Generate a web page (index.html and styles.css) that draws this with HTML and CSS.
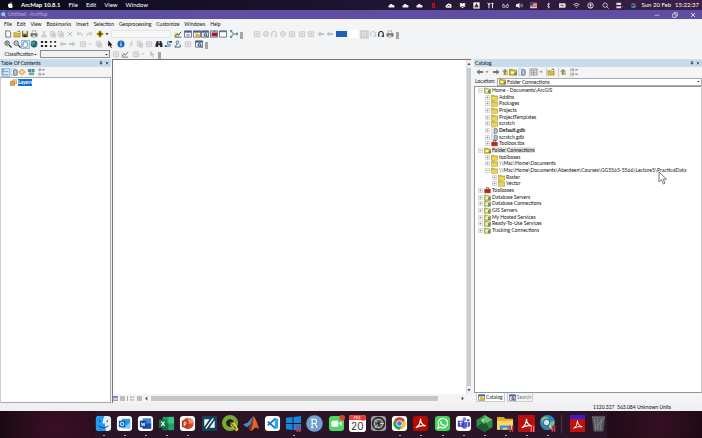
FILE: index.html
```html
<!DOCTYPE html>
<html lang="en">
<head>
<meta charset="utf-8">
<title>Untitled - ArcMap</title>
<link rel="stylesheet" href="styles.css">
</head>
<body>
<svg class="sprite" aria-hidden="true">
  <symbol id="new" viewBox="0 0 9 9"><path d="M2 1h4l1.500 1.500V8H2z" fill="#fff" stroke="#556" stroke-width=".9"/></symbol>
  <symbol id="open" viewBox="0 0 9 9"><path d="M1 3h3l1 1h3v4H1z" fill="#e0bd2c" stroke="#8a7a20" stroke-width=".6"/><path d="M5 2l2-1 1 2" fill="none" stroke="#3a7a3a"/></symbol>
  <symbol id="save" viewBox="0 0 9 9"><path d="M1 1h7v7H1z" fill="#7d7c24"/><path d="M2.500 1h4v3h-4z" fill="#e9e9dc"/><path d="M3 6h3v2H3z" fill="#222"/></symbol>
  <symbol id="print" viewBox="0 0 9 9"><path d="M1 4h7v3H1z" fill="#8d8d78" stroke="#444" stroke-width=".6"/><path d="M2.500 1h4v3h-4zM2.500 6h4v2h-4z" fill="#fff" stroke="#555" stroke-width=".5"/></symbol>
  <symbol id="cut" viewBox="0 0 9 9"><path d="M3 1l2 5M6 1L4 6" stroke="#bbb" stroke-width=".8"/><path d="M2 6h2v2H2zM5 6h2v2H5z" fill="none" stroke="#bbb" stroke-width=".8"/></symbol>
  <symbol id="copy" viewBox="0 0 9 9"><path d="M1.500 1.500h4v5h-4zM3.500 3.500h4v4.500h-4zM4.500 5h2M4.500 6.500h2" fill="#e8e8e8" stroke="#c0c0c0" stroke-width=".8"/></symbol>
  <symbol id="del" viewBox="0 0 9 9"><path d="M2 2l5 5M7 2L2 7" stroke="#b5b5b5"/></symbol>
  <symbol id="undo" viewBox="0 0 9 9"><path d="M2 2v3h3M2 5c2-3 5-2 5 2" fill="none" stroke="#bbb"/></symbol>
  <symbol id="redo" viewBox="0 0 9 9"><path d="M7 2v3H4M7 5C5 2 2 3 2 7" fill="none" stroke="#bbb"/></symbol>
  <symbol id="add" viewBox="0 0 9 9"><path d="M4.500 0L9 4.500 4.500 9 0 4.500z" fill="#f1c928"/><path d="M4.500 1.500v6M1.500 4.500h6" stroke="#222" stroke-width="1.400"/></symbol>
  <symbol id="chart" viewBox="0 0 9 9"><path d="M0 3h4v5H0z" fill="#dcdc9c"/><path d="M1 7l3-3 1 2 3-4M1 8h7" fill="none" stroke="#444"/></symbol>
  <symbol id="win" viewBox="0 0 9 9"><path d="M.5 1h8v7h-8z" fill="#fff" stroke="#446" stroke-width=".8"/><path d="M.5 1h8v2h-8z" fill="#3c62a8"/><path d="M2 5h5M2 6.500h5M4.500 3v5" stroke="#88a" stroke-width=".6"/></symbol>
  <symbol id="cat" viewBox="0 0 9 9"><path d="M.5 1h8v7h-8z" fill="#fff" stroke="#446" stroke-width=".8"/><path d="M.5 1h8v2h-8z" fill="#3c62a8"/><path d="M2 4h3l3 1v3H3z" fill="#d9bd28"/></symbol>
  <symbol id="find" viewBox="0 0 9 9"><path d="M.5 1h8v7h-8z" fill="#eef" stroke="#446" stroke-width=".8"/><path d="M.5 1h8v2h-8z" fill="#3c62a8"/><circle cx="5" cy="5.500" r="1.500" fill="#bde" stroke="#333"/><path d="M6 6.500L8 8.500" stroke="#333"/></symbol>
  <symbol id="box" viewBox="0 0 9 9"><path d="M.5 1h8v7h-8z" fill="#dde" stroke="#446" stroke-width=".8"/><path d="M2 3h6v4H2z" fill="#b02535"/><path d="M3 3l1-1h2l1 1M2 5h6" fill="none" stroke="#611" stroke-width=".7"/></symbol>
  <symbol id="py" viewBox="0 0 9 9"><path d="M.5 1h8v7h-8z" fill="#fff" stroke="#446" stroke-width=".8"/><path d="M.5 1h8v1.500h-8z" fill="#5b6c9c"/></symbol>
  <symbol id="view" viewBox="0 0 9 9"><path d="M1 1h7v7H1zM1 3h7M4 3v5M1 5.500h7" fill="#eee" stroke="#888" stroke-width=".9"/></symbol>
  <symbol id="model" viewBox="0 0 9 9"><path d="M1 1l3 3.500L1 8M4 4.500h3" fill="none" stroke="#3a6e5c"/><path d="M0 0h2.500v2.500H0zM6.500 3H9v3H6.500zM0 6.500h2.500V9H0z" fill="#5a9e86"/></symbol>
  <symbol id="zin" viewBox="0 0 9 9"><circle cx="3.500" cy="3.500" r="2.500" fill="#dff" stroke="#333" stroke-width=".9"/><path d="M2 3.500h3M3.500 2v3" stroke="#333" stroke-width=".7"/><path d="M5.500 5.500L8.500 8.500" stroke="#333" stroke-width="1.400"/></symbol>
  <symbol id="zout" viewBox="0 0 9 9"><circle cx="3.500" cy="3.500" r="2.500" fill="#dff" stroke="#333" stroke-width=".9"/><path d="M2 3.500h3" stroke="#333" stroke-width=".7"/><path d="M5.500 5.500L8.500 8.500" stroke="#333" stroke-width="1.400"/></symbol>
  <symbol id="hand" viewBox="0 0 9 9"><path d="M3 8L1 5l1-.5 1 1V2h1V1h1v1h1v1h1.200v3L6.500 8z" fill="#fff" stroke="#456" stroke-width=".6"/></symbol>
  <symbol id="globe" viewBox="0 0 9 9"><circle cx="4.500" cy="4.500" r="3.800" fill="#1e5c8c"/><path d="M2 2l3 0 1 2-2 1-1 2-2-3zM6 5l2 0-1 2z" fill="#47a94d"/></symbol>
  <symbol id="lens" viewBox="0 0 9 9"><circle cx="4" cy="4" r="3" fill="#5ecbe0" stroke="#e5f3f8"/><path d="M6 6l2.500 2.500" stroke="#ddd" stroke-width="1.400"/></symbol>
  <symbol id="fin" viewBox="0 0 9 9"><path d="M1 1h2.500v2.500H1zM5.500 1H8v2.500H5.500zM1 5.500h2.500V8H1zM5.500 5.500H8V8H5.500z" fill="#222"/></symbol>
  <symbol id="fout" viewBox="0 0 9 9"><path d="M1 1h2v2H1zM6 1h2v2H6zM1 6h2v2H1zM6 6h2v2H6z" fill="#222"/></symbol>
  <symbol id="left" viewBox="0 0 9 9"><path d="M0.500 4.500l3.500-3V3.500h4v2H4v2z" fill="currentColor"/></symbol>
  <symbol id="right" viewBox="0 0 9 9"><path d="M8.500 4.500L5 1.500V3.500H1v2h4v2z" fill="currentColor"/></symbol>
  <symbol id="gray" viewBox="0 0 9 9"><path d="M1.500 2h6v5.500h-6zM3 4h3M3 5.500h3" fill="#eee" stroke="#c0c0c0" stroke-width=".9"/></symbol>
  <symbol id="ring" viewBox="0 0 9 9"><circle cx="4.500" cy="4.500" r="2.800" fill="#eee" stroke="#c0c0c0"/><path d="M3 4.500h3" stroke="#c0c0c0"/></symbol>
  <symbol id="turn" viewBox="0 0 9 9"><path d="M2 7.500V4c0-3 5-3 5 0v3.500M5 7h3" fill="none" stroke="currentColor" stroke-width="1.200"/></symbol>
  <symbol id="ptr" viewBox="0 0 9 9"><path d="M2.500 .5v7l1.700-1.500L5.500 9l1-.5-1.200-2.700h2z" fill="currentColor"/></symbol>
  <symbol id="info" viewBox="0 0 9 9"><circle cx="4.500" cy="4.500" r="4" fill="#1666b5"/><path d="M4.500 2v1M4.500 4v3" stroke="#fff" stroke-width="1.200"/></symbol>
  <symbol id="slash" viewBox="0 0 9 9"><path d="M6 1L4 4h2L3 8" fill="none" stroke="#bbb"/></symbol>
  <symbol id="bino" viewBox="0 0 9 9"><path d="M2 1h2v3h1V1h2l1.500 4v3H5.500V6h-2v2H.5V5z" fill="#222d3c"/></symbol>
  <symbol id="route" viewBox="0 0 9 9"><path d="M2 7h5V5H4V2h4" fill="none" stroke="#3b83a4"/><path d="M6 1h3v2H6zM1 6h2v2H1z" fill="#345"/></symbol>
  <symbol id="xy" viewBox="0 0 9 9"><circle cx="5" cy="2.500" r="1.500" fill="none" stroke="#276c8b"/><path d="M5 4L2 8h6V5" fill="none" stroke="#38596a"/></symbol>
  <symbol id="folder" viewBox="0 0 9 9"><path d="M.5 1.500h3.500l.7 1h3.800v5.500h-8z" fill="#ddc233" stroke="#9c8a27" stroke-width=".7"/><path d="M1 4h7v3.500H1z" fill="#ecd75c"/></symbol>
  <symbol id="fconn" viewBox="0 0 9 9"><path d="M.5 1.500h3.500l.7 1h3.800v5.500h-8z" fill="#d6bb2c" stroke="#7e7120" stroke-width=".7"/><path d="M2 4h4v2.500H2z" fill="#fff8c0"/><path d="M6 5h3v3H6z" fill="#698b5b"/></symbol>
  <symbol id="server" viewBox="0 0 9 9"><path d="M.5 1.500h3.500l.7 1h3.800v5.500h-8z" fill="#d3c53c" stroke="#777a35" stroke-width=".7"/><path d="M2 3h4v4H2z" fill="#eef3dc"/><path d="M5 4h3v4H5z" fill="#5e9a78"/></symbol>
  <symbol id="gdb" viewBox="0 0 9 9"><path d="M1 1h4v7H1z" fill="#fff" stroke="#8a93a0" stroke-width=".6"/><path d="M4 2.500c1-1 3-1 4 0v5c-1 1-3 1-4 0z" fill="#b4c6d8" stroke="#456480" stroke-width=".9"/></symbol>
  <symbol id="tbx" viewBox="0 0 9 9"><path d="M3 2.500V1h3v1.500" fill="none" stroke="#733"/><path d="M.5 2.500h8V8h-8z" fill="#c2382f"/><path d="M.5 5h8" stroke="#7c1512" stroke-width=".8"/></symbol>
  <symbol id="layers" viewBox="0 0 9 9"><path d="M3.500 1h5v5h-5z" fill="#f8d48d" stroke="#b47a1c" stroke-width=".7"/><path d="M.7 3h5v5.300h-5z" fill="#eda63f" stroke="#a66c15" stroke-width=".7"/></symbol>
  <symbol id="vis" viewBox="0 0 9 9"><path d="M4.500 .5L9 4.500l-4.500 4L0 4.500z" fill="#f0b060"/><circle cx="4.500" cy="4.500" r="1.500" fill="#fbe3b8"/></symbol>
  <symbol id="pick" viewBox="0 0 9 9"><path d="M1 1h3.500v3.500H1zM5 1h3.500v3.500H5z" fill="#4c8fa8"/><path d="M2 5h6v3H2z" fill="#79a98e"/></symbol>
  <symbol id="up" viewBox="0 0 9 9"><path d="M1 4l3.500-3L8 4H6v4H3V4z" fill="#8c8c74"/><path d="M5 5h3v3H5z" fill="#ddc53c"/></symbol>
  <symbol id="tree" viewBox="0 0 9 9"><path d="M2 1v6.500h3M2 4h3M5.500 4h2.500M5.500 7.500H8M1 1.500h3" fill="none" stroke="#7c8498" stroke-width=".9"/></symbol>
  <symbol id="opts" viewBox="0 0 9 9"><path d="M1 1h2v2H1zM1 6h2v2H1zM4.500 2H8M4.500 7H8M6 1v2M6 6v2" fill="none" stroke="#8a8a92" stroke-width=".9"/></symbol>
  <symbol id="cloud" viewBox="0 0 9 9"><path d="M2 7C-.2 7 0 4.300 2 4.300 2.500 2 5.500 1.800 6 4c3-.3 3.200 3 1 3z" fill="#eee"/></symbol>
  <symbol id="close" viewBox="0 0 9 9"><path d="M1.500 1.500l6 6M7.500 1.500l-6 6" stroke="currentColor" stroke-width="1.300"/></symbol>
  <symbol id="pin" viewBox="0 0 9 9"><path d="M3 1h3v4H3zM1.500 5.500h6M4.500 5v3.500" fill="none" stroke="#223" stroke-width="1.200"/></symbol>
  <symbol id="caret" viewBox="0 0 9 9"><path d="M1 3h7L4.500 7z" fill="currentColor"/></symbol>
  <symbol id="plus" viewBox="0 0 9 9"><path d="M1 1h7v7H1z" fill="#fff" stroke="#b5b5b5"/><path d="M2.500 4.500h4M4.500 2.500v4" stroke="#778"/></symbol>
  <symbol id="minus" viewBox="0 0 9 9"><path d="M1 1h7v7H1z" fill="#fff" stroke="#b5b5b5"/><path d="M2.500 4.500h4" stroke="#778"/></symbol>
</svg>

<header class="macbar">
  <nav class="macmenu">
    <svg class="apple" viewBox="0 0 10 12"><path d="M7 0c0 1.500-1 2.500-2.200 2.600C4.700 1.300 5.700.2 7 0zM5 3.300C5.600 3.300 6.300 2.800 7.300 2.800c.8 0 1.600.4 2.100 1.200-1.900 1.200-1.600 3.800.4 4.600C9.200 10.300 8.300 12 7.100 12c-.8 0-1.100-.5-2-.5s-1.300.5-2 .5C1.400 12 0 9 0 6.700 0 4.200 1.500 2.900 3 2.900c.9 0 1.500.4 2 .4z" fill="#fff"/></svg>
    <b>ArcMap 10.8.1</b><a href="#">File</a><a href="#">Edit</a><a href="#">View</a><a href="#">Window</a>
  </nav>
  <div class="tray">
    <svg><use href="#cloud"/></svg><svg><use href="#cloud"/></svg><svg><use href="#cloud"/></svg>
    <svg viewBox="0 0 9 9"><path d="M3.500 1v7M5.500 1v7" stroke="#d2111f" stroke-width="1.400"/></svg>
    <svg viewBox="0 0 9 9"><path d="M2 7.500C0 7 .5 4 2 4c1-3 6-3 6.500 1C9 7 7 8 6 7.500z" fill="#eee"/><path d="M3 6l2-2 1.500 2" fill="none" stroke="#332244"/></svg>
    <svg viewBox="0 0 9 9"><path d="M2.500 1l2 1.300 2-1.300L8.500 2.500 6.800 3.800 8.500 5 6.500 6.500 4.500 5.200 2.500 6.500.5 5l1.700-1.200L.5 2.500zM3 7l1.500-1L6 7 4.500 8z" fill="#fff"/></svg>
    <svg viewBox="0 0 9 9"><path d="M.5 .5h8v8h-8z" fill="#fff"/><path d="M2 6l2.500-4L7 6zM2 7.300h5" fill="#423" stroke="#423" stroke-width=".6"/></svg>
    <svg viewBox="0 0 9 9"><path d="M1 1l1.500 3L4 1M2.500 4v4M7 1v7M5.500 2h3" stroke="#fff" fill="none" stroke-width="1.200"/></svg>
    <svg viewBox="0 0 9 9"><circle cx="2.300" cy="5.500" r="1.700" fill="none" stroke="#ddd"/><circle cx="6.700" cy="5.500" r="1.700" fill="none" stroke="#ddd"/><path d="M1 4l1-2M8 4L7 2" stroke="#ddd"/></svg>
    <svg viewBox="0 0 9 9"><path d="M0 3h2l2.500-2v7L2 6H0z" fill="#fff"/><path d="M6 3q1.200 1.500 0 3M7.500 2q2 2.500 0 5" stroke="#ddd" fill="none" stroke-width=".8"/></svg>
    <svg viewBox="0 0 9 9"><path d="M0 1h9v7H0z" fill="#e8dadc"/><path d="M0 2h9M0 4h9M0 6h9" stroke="#c43845"/><path d="M0 1h4v3.500H0z" fill="#35447c"/></svg>
    <svg viewBox="0 0 9 9"><path d="M3 2.500l3 4L4.500 8V1L6 2.500l-3 4" fill="none" stroke="#ddd" stroke-width=".9"/></svg>
    <svg viewBox="0 0 9 9"><path d="M0 2h8v5H0zM8.500 3.500v2" fill="#ddd" stroke="#ddd" stroke-width=".6"/><path d="M2 4.500h4" stroke="#534"/></svg>
    <svg viewBox="0 0 9 9"><path d="M.5 3.500q4-3.500 8 0M2.300 5.300q2.200-1.800 4.400 0M4.500 7.500v-1" fill="none" stroke="#eee" stroke-width="1.100"/></svg>
    <svg viewBox="0 0 9 9"><circle cx="4.500" cy="4.500" r="3.500" fill="none" stroke="#fff"/><circle cx="4.500" cy="3.800" r="1.300" fill="#fff"/><path d="M2.500 7q2-2.500 4 0z" fill="#fff"/></svg>
    <svg viewBox="0 0 9 9"><circle cx="4" cy="4" r="2.800" fill="none" stroke="#ddd"/><path d="M6 6l2.500 2.500" stroke="#ddd"/></svg>
    <svg viewBox="0 0 9 9"><path d="M.5 1h6v3h-6zM.5 5.500h6v2.500h-6z" fill="#ddd"/><circle cx="8" cy="6" r="1" fill="#e24"/></svg>
    <svg viewBox="0 0 9 9"><circle cx="4.500" cy="4.500" r="3.500" fill="#274b66"/><path d="M2 3q2.500-2 5 1" stroke="#d5477c" fill="none" stroke-width="1.400"/><path d="M2 6q3 2 5-1" stroke="#3fd0ad" fill="none" stroke-width="1.400"/></svg>
  </div>
  <div class="clock"><span>Sun 20 Feb</span><time>15:22:37</time></div>
</header>

<div class="titlebar">
  <svg class="appicon"><use href="#lens"/></svg><span>Untitled - ArcMap</span>
  <div class="wincontrols">
    <button aria-label="Minimize"><svg viewBox="0 0 9 9"><path d="M1 5h7" stroke="#ddd"/></svg></button>
    <button aria-label="Restore"><svg viewBox="0 0 9 9"><path d="M1 3h5v5H1zM3 3V1h5v5H6" fill="none" stroke="#eee"/></svg></button>
    <button aria-label="Close window"><svg><use href="#close"/></svg></button>
  </div>
</div>

<nav class="menubar"><a href="#">File</a><a href="#">Edit</a><a href="#">View</a><a href="#">Bookmarks</a><a href="#">Insert</a><a href="#">Selection</a><a href="#">Geoprocessing</a><a href="#">Customize</a><a href="#">Windows</a><a href="#">Help</a></nav>

<div class="toolbar">
  <div class="g4"><button aria-label="New"><svg><use href="#new"/></svg></button><button aria-label="Open"><svg><use href="#open"/></svg></button><button aria-label="Save"><svg><use href="#save"/></svg></button><button aria-label="Print"><svg><use href="#print"/></svg></button></div>
  <div class="g4"><button aria-label="Cut"><svg><use href="#cut"/></svg></button><button aria-label="Copy"><svg><use href="#copy"/></svg></button><button aria-label="Paste"><svg><use href="#copy"/></svg></button><button aria-label="Delete"><svg><use href="#del"/></svg></button></div>
  <div class="g2"><button aria-label="Undo"><svg><use href="#undo"/></svg></button><button aria-label="Redo"><svg><use href="#redo"/></svg></button></div>
  <div class="gd"><button aria-label="Add data"><svg><use href="#add"/></svg></button><button class="drop" aria-label="Add data options"><svg><use href="#caret"/></svg></button></div>
  <select class="scale" aria-label="Map scale"></select>
  <div class="g1"><button aria-label="Editor"><svg><use href="#chart"/></svg></button></div>
  <div class="g5"><button aria-label="Contents"><svg><use href="#win"/></svg></button><button aria-label="Catalog"><svg><use href="#cat"/></svg></button><button aria-label="Search"><svg><use href="#find"/></svg></button><button aria-label="Toolbox"><svg><use href="#box"/></svg></button><button aria-label="Python"><svg><use href="#py"/></svg></button></div>
  <div class="g1"><button aria-label="Model builder"><svg><use href="#model"/></svg></button></div>
  <i class="grip"></i>
  <div class="g5 second"><button aria-label="Effects 1"><svg><use href="#gray"/></svg></button><button aria-label="Effects 2"><svg><use href="#ring"/></svg></button><button class="dim" aria-label="Effects 3"><svg><use href="#turn"/></svg></button><button aria-label="Effects 4"><svg><use href="#ring"/></svg></button><button aria-label="Effects 5"><svg><use href="#gray"/></svg></button></div>
  <div class="g2"><button aria-label="Grid"><svg><use href="#gray"/></svg></button><button aria-label="Table"><svg><use href="#gray"/></svg></button></div>
  <div class="g2"><button class="dim" aria-label="Previous"><svg><use href="#left"/></svg></button><button class="dim" aria-label="Next"><svg><use href="#left"/></svg></button></div>
  <span class="swatch"></span><select class="tiny" aria-label="Color"></select>
  <div class="g4"><button class="grayed" aria-label="Trace"><svg><use href="#gray"/></svg></button><button class="dim" aria-label="Arc"><svg><use href="#turn"/></svg></button><button aria-label="Bend"><svg><use href="#turn"/></svg></button><button aria-label="Print setup"><svg><use href="#print"/></svg></button></div>
  <i class="grip"></i>
</div>

<div class="toolbar">
  <div class="g4"><button aria-label="Zoom in"><svg><use href="#zin"/></svg></button><button aria-label="Zoom out"><svg><use href="#zout"/></svg></button><button class="on" aria-label="Pan"><svg><use href="#hand"/></svg></button><button aria-label="Full extent"><svg><use href="#globe"/></svg></button></div>
  <div class="g2"><button aria-label="Fixed zoom in"><svg><use href="#fin"/></svg></button><button aria-label="Fixed zoom out"><svg><use href="#fout"/></svg></button></div>
  <div class="g2"><button class="dim" aria-label="Back"><svg><use href="#left"/></svg></button><button class="dim" aria-label="Forward"><svg><use href="#right"/></svg></button></div>
  <div class="gd"><button aria-label="Select features"><svg><use href="#gray"/></svg></button><button class="drop dim" aria-label="Select options"><svg><use href="#caret"/></svg></button></div>
  <div class="g1"><button aria-label="Clear selection"><svg><use href="#copy"/></svg></button></div>
  <div class="g1"><button aria-label="Select elements"><svg><use href="#ptr"/></svg></button></div>
  <div class="g1"><button aria-label="Identify"><svg><use href="#info"/></svg></button></div>
  <div class="g3"><button aria-label="Hyperlink"><svg><use href="#slash"/></svg></button><button aria-label="HTML popup"><svg><use href="#copy"/></svg></button><button aria-label="Measure"><svg><use href="#gray"/></svg></button></div>
  <div class="g3"><button aria-label="Find"><svg><use href="#bino"/></svg></button><button aria-label="Find route"><svg><use href="#route"/></svg></button><button aria-label="Go to XY"><svg><use href="#xy"/></svg></button></div>
  <div class="g1"><button aria-label="Time slider"><svg><use href="#gray"/></svg></button></div>
  <div class="g1"><button aria-label="Viewer window"><svg><use href="#find"/></svg></button></div>
  <i class="grip"></i>
</div>

<div class="toolbar">
  <button class="classify">Classification <svg><use href="#caret"/></svg></button>
  <div class="layerpick"><select aria-label="Layer"></select><svg><use href="#caret"/></svg></div>
  <div class="g2"><button aria-label="Training samples"><svg><use href="#gray"/></svg></button><button class="dim" aria-label="Histogram"><svg><use href="#chart"/></svg></button></div>
  <div class="gd"><button aria-label="Draw polygon"><svg><use href="#gray"/></svg></button><button class="drop dim" aria-label="Draw options"><svg><use href="#caret"/></svg></button></div>
  <div class="g1"><button class="dim" aria-label="Clear samples"><svg><use href="#ptr"/></svg></button></div>
  <i class="grip"></i>
</div>

<main class="work">
  <section class="pane toc">
    <h2>Table Of Contents<span><svg><use href="#pin"/></svg><svg><use href="#close"/></svg></span></h2>
    <div class="tools"><div class="g4"><button class="on" aria-label="List by drawing order"><svg><use href="#tree"/></svg></button><button aria-label="List by source"><svg><use href="#gdb"/></svg></button><button aria-label="List by visibility"><svg><use href="#vis"/></svg></button><button aria-label="List by selection"><svg><use href="#pick"/></svg></button></div><div class="g1"><button aria-label="Options"><svg><use href="#opts"/></svg></button></div></div>
    <div class="list"><div class="layer"><svg><use href="#layers"/></svg><b>Layers</b></div></div>
  </section>

  <section class="map">
    <div class="canvas"></div>
    <div class="vbar"><svg class="flip"><use href="#caret"/></svg><i></i><svg><use href="#caret"/></svg></div>
    <div class="hbar"><svg class="sel"><use href="#win"/></svg><svg><use href="#view"/></svg><b></b><svg><use href="#opts"/></svg><svg><use href="#view"/></svg><svg class="prev"><use href="#caret"/></svg><i></i><svg class="next"><use href="#caret"/></svg></div>
  </section>

  <section class="pane catalog">
    <h2>Catalog<span><svg><use href="#pin"/></svg><svg><use href="#close"/></svg></span></h2>
    <div class="tools"><div class="gd"><button aria-label="Back"><svg><use href="#left"/></svg></button><button class="drop" aria-label="Back history"><svg><use href="#caret"/></svg></button></div><div class="g4"><button aria-label="Forward"><svg><use href="#right"/></svg></button><button aria-label="Up one level"><svg><use href="#up"/></svg></button><button aria-label="Home folder"><svg><use href="#fconn"/></svg></button><button aria-label="Default geodatabase"><svg><use href="#gdb"/></svg></button></div><div class="gd sep"><button aria-label="View"><svg><use href="#view"/></svg></button><button class="drop" aria-label="View options"><svg><use href="#caret"/></svg></button></div><div class="g1 sep"><button aria-label="Connect folder"><svg><use href="#open"/></svg></button></div><div class="g1 sep"><button aria-label="Toggle tree"><svg><use href="#up"/></svg></button></div><div class="g1 sep"><button aria-label="Options"><svg><use href="#opts"/></svg></button></div></div>
    <div class="location"><label for="loc">Location:</label><div class="field"><svg><use href="#fconn"/></svg><select id="loc"><option>Folder Connections</option></select><svg class="arrow"><use href="#caret"/></svg></div></div>
    <div class="treebox">
      <ul class="tree">
        <li><svg><use href="#minus"/></svg><svg><use href="#server"/></svg><span>Home - Documents\ArcGIS</span></li>
        <li class="l1"><svg><use href="#plus"/></svg><svg><use href="#folder"/></svg><span>AddIns</span></li>
        <li class="l1"><svg><use href="#plus"/></svg><svg><use href="#folder"/></svg><span>Packages</span></li>
        <li class="l1"><svg><use href="#plus"/></svg><svg><use href="#folder"/></svg><span>Projects</span></li>
        <li class="l1"><svg><use href="#plus"/></svg><svg><use href="#folder"/></svg><span>ProjectTemplates</span></li>
        <li class="l1"><svg><use href="#plus"/></svg><svg><use href="#folder"/></svg><span>scratch</span></li>
        <li class="l1"><svg><use href="#plus"/></svg><svg><use href="#gdb"/></svg><b>Default.gdb</b></li>
        <li class="l1"><svg><use href="#plus"/></svg><svg><use href="#gdb"/></svg><span>scratch.gdb</span></li>
        <li class="l1"><svg><use href="#plus"/></svg><svg><use href="#tbx"/></svg><span>Toolbox.tbx</span></li>
        <li><svg><use href="#minus"/></svg><svg><use href="#fconn"/></svg><span class="current">Folder Connections</span></li>
        <li class="l1"><svg><use href="#plus"/></svg><svg><use href="#folder"/></svg><span>toolboxes</span></li>
        <li class="l1"><svg><use href="#plus"/></svg><svg><use href="#folder"/></svg><span>\\Mac\Home\Documents</span></li>
        <li class="l1"><svg><use href="#minus"/></svg><svg><use href="#folder"/></svg><span>\\Mac\Home\Documents\Aberdeen\Courses\GG5565-5566\Lecture5\<span class="anchor">PracticalData<svg class="cursor" viewBox="0 0 9 14"><path d="M1 1v10l2.500-2.300L5.300 13l1.700-.8L5.200 8.200H8.500z" fill="#fff" stroke="#555" stroke-width=".8"/></svg></span></span></li>
        <li class="l2"><svg><use href="#plus"/></svg><svg><use href="#folder"/></svg><span>Raster</span></li>
        <li class="l2"><svg><use href="#plus"/></svg><svg><use href="#folder"/></svg><span>Vector</span></li>
        <li><svg><use href="#plus"/></svg><svg><use href="#tbx"/></svg><span>Toolboxes</span></li>
        <li><svg><use href="#plus"/></svg><svg><use href="#server"/></svg><span>Database Servers</span></li>
        <li><svg><use href="#plus"/></svg><svg><use href="#server"/></svg><span>Database Connections</span></li>
        <li><svg><use href="#plus"/></svg><svg><use href="#server"/></svg><span>GIS Servers</span></li>
        <li><svg><use href="#plus"/></svg><svg><use href="#server"/></svg><span>My Hosted Services</span></li>
        <li><svg><use href="#plus"/></svg><svg><use href="#server"/></svg><span>Ready-To-Use Services</span></li>
        <li><svg><use href="#plus"/></svg><svg><use href="#server"/></svg><span>Tracking Connections</span></li>
      </ul>
    </div>
    <div class="tabs"><button class="active"><svg><use href="#cat"/></svg>Catalog</button><button><svg><use href="#find"/></svg>Search</button></div>
  </section>
</main>

<footer class="status"><span>1120.327&nbsp; 563.084 Unknown Units</span></footer>

<div class="desktop">
  <nav class="dock" aria-label="Dock">
    <a href="#" class="run" aria-label="Finder"><svg viewBox="0 0 18 18"><rect x="1" y="1" width="16" height="16" rx="3.500" fill="#e6eef5"/><path d="M4.500 1H10q-2 4-2 8h2.500q0 4 1 8h-7Q1 17 1 13.500v-9Q1 1 4.500 1z" fill="#2199ef"/><path d="M5 5.500v2M13 5.500v2M4 11.500q5 4 10 0" fill="none" stroke="#123a66"/></svg></a>
    <a href="#" class="run" aria-label="Outlook"><svg viewBox="0 0 18 18"><rect x="1" y="1" width="16" height="16" rx="3.500" fill="#fff"/><path d="M6 4h9v10H6z" fill="#2d9be6"/><path d="M6 8l5 3 4-3v6H6z" fill="#7ccbf5"/><path d="M3 6h7v7H3z" fill="#0f65b8"/><circle cx="6.500" cy="9.500" r="1.800" fill="none" stroke="#fff"/></svg></a>
    <a href="#" class="run" aria-label="Word"><svg viewBox="0 0 18 18"><rect x="1" y="1" width="16" height="16" rx="3.500" fill="#fff"/><path d="M6 3.500h9v11H6z" fill="#3b8be0"/><path d="M6 9h9v5.500H6z" fill="#1c4fa6"/><path d="M3 6h7v7H3z" fill="#174293"/><path d="M4.500 8l1 3.500 1-3 1 3 1-3.500" fill="none" stroke="#fff" stroke-width=".8"/></svg></a>
    <a href="#" class="run" aria-label="Excel"><svg viewBox="0 0 18 18"><path d="M5 2h12v14H5z" fill="#24a263"/><path d="M11 2h6v7h-6z" fill="#38c483"/><path d="M5 9h6v7H5z" fill="#156b3e"/><path d="M1 5h8.500v8.500H1z" fill="#107a40"/><path d="M3.500 7l3.500 4.500M7 7l-3.500 4.500" stroke="#fff" stroke-width="1.200"/></svg></a>
    <a href="#" class="run" aria-label="PowerPoint"><svg viewBox="0 0 18 18"><rect x="1" y="1" width="16" height="16" rx="3.500" fill="#fff"/><circle cx="9.500" cy="9" r="6" fill="#d8482b"/><path d="M9.500 3a6 6 0 0 1 6 6h-6z" fill="#f28a6b"/><path d="M3 6h7v7H3z" fill="#b9331a"/><path d="M5.500 12V7.500h1.500q1.500 1.300 0 2.500H5.500" fill="none" stroke="#fff"/></svg></a>
    <a href="#" aria-label="Zed"><svg viewBox="0 0 18 18"><path d="M1 1h16v16H1z" fill="#10435a"/><path d="M3.500 4.500H9l-5.500 8zM14.500 13.500H9l5.500-8z" fill="#fff"/><path d="M13 3.500L5 14.500" stroke="#fff" stroke-width="1.400"/></svg></a>
    <a href="#" aria-label="QGIS"><svg viewBox="0 0 18 18"><circle cx="8.500" cy="8.500" r="6.300" fill="none" stroke="#77ab2d" stroke-width="4.400"/><path d="M9 8h4l4.500 7-2 2.500L9 11z" fill="#e8cf3f"/><path d="M9 8l6 7" stroke="#517820" stroke-width="1.500"/></svg></a>
    <a href="#" aria-label="MATLAB"><svg viewBox="0 0 18 18"><path d="M0 10l5-2 6-7-3 9-4 3z" fill="#3a8fc4"/><path d="M11 1q3 3 6 14-3-3-5-1-2 3-4 3l-2-4q3-1 5-12z" fill="#dd6a24"/><path d="M11 1q-1 8-5 12l2 4q3-6 3-16z" fill="#8d2618"/></svg></a>
    <a href="#" aria-label="Visual Studio Code"><svg viewBox="0 0 18 18"><rect x="1" y="1" width="16" height="16" rx="3.500" fill="#fff"/><path d="M12 4L4 11M12 14L4 7" stroke="#1979be" stroke-width="2"/><path d="M11.500 3l3.500 1.500v9L11.500 15z" fill="#2da4ee"/></svg></a>
    <a href="#" class="run" aria-label="Windows"><svg viewBox="0 0 18 18"><path d="M1 3l7-1v6.500H1zM9 2l8-1v7.500H9zM1 9.500h7V16l-7-1zM9 9.500h8V17l-8-1z" fill="#1687e0"/><path d="M13 11v7M15.500 11v7" stroke="#d13246" stroke-width="1.600"/></svg></a>
    <a href="#" aria-label="RStudio"><svg viewBox="0 0 18 18"><circle cx="9" cy="9" r="8.800" fill="#709fd0"/><path d="M6.500 13.500v-9H10q2.500 2.300 0 4.500H7M9.500 9l2.500 4.500M5.300 13.500h2.500M5.300 4.500h2" fill="none" stroke="#fff" stroke-width="1.200"/></svg></a>
    <a href="#" aria-label="FaceTime"><svg viewBox="0 0 18 18"><rect x="1" y="1" width="16" height="16" rx="3.500" fill="#4cd964"/><rect x="3.500" y="6" width="7.500" height="6.500" rx="1.500" fill="#fff"/><path d="M11.500 9l3-2.500V12z" fill="#fff"/><circle cx="15" cy="3" r="3" fill="#ea3a35"/></svg></a>
    <a href="#" class="cal" aria-label="Calendar"><em>FEB</em><span>20</span><svg class="badge" viewBox="0 0 6 6"><circle cx="3" cy="3" r="2.800" fill="#ea3a35"/></svg></a>
    <a href="#" aria-label="System Preferences"><svg viewBox="0 0 18 18"><rect x="1" y="1" width="16" height="16" rx="3.500" fill="#9b9da0"/><circle cx="9" cy="9" r="6.500" fill="#555" stroke="#222" stroke-width="1.200"/><circle cx="9" cy="9" r="4.300" fill="none" stroke="#b8b8b8" stroke-width="1.200"/><path d="M9 9L5 5M9 9h6M9 9l-4 5" stroke="#ccc"/><circle cx="9" cy="9" r="1.500" fill="#222"/></svg></a>
    <a href="#" class="run" aria-label="Chrome"><svg viewBox="0 0 18 18"><rect x="1" y="1" width="16" height="16" rx="3.500" fill="#fff"/><circle cx="9" cy="9" r="6.500" fill="#f5c324"/><path d="M9 9L3.370 5.750A6.500 6.500 0 0 1 14.630 5.750z" fill="#df4034"/><path d="M9 9L3.370 5.750A6.500 6.500 0 0 0 9 15.500l3-5z" fill="#2ba24c"/><circle cx="9" cy="9" r="3" fill="#377de8" stroke="#fff"/></svg></a>
    <a href="#" class="run" aria-label="Acrobat"><svg viewBox="0 0 18 18"><rect x="1" y="1" width="16" height="16" rx="3" fill="#b30b00"/><path d="M4 13.500q5-3 5-9.500 0 6 5.500 7.500-5.500-1-10.500 2z" fill="none" stroke="#fff" stroke-width="1.200"/></svg></a>
    <a href="#" class="run" aria-label="WhatsApp"><svg viewBox="0 0 18 18"><rect x="1" y="1" width="16" height="16" rx="3.500" fill="#43d45c"/><path d="M4 14l1-3a5 5 0 1 1 2 2z" fill="none" stroke="#fff" stroke-width="1.300"/><path d="M7 6.500q0 4 4.500 4.500" fill="none" stroke="#fff" stroke-width="1.500"/></svg></a>
    <a href="#" class="run" aria-label="Teams"><svg viewBox="0 0 18 18"><rect x="1" y="1" width="16" height="16" rx="3.500" fill="#fff"/><circle cx="10" cy="4.500" r="2" fill="#7b83eb"/><circle cx="14" cy="5.500" r="1.300" fill="#5059c9"/><path d="M7 7.500h6V13q-3 3-6 0zM13.500 7.500H16V12l-2.500 1z" fill="#5b62cb"/><path d="M3 6h6.500v6.500H3z" fill="#4048b0"/><path d="M4.500 7.700h3.500M6.200 7.700v3.500" stroke="#fff"/></svg></a>
    <a href="#" class="run" aria-label="Malwarebytes"><svg viewBox="0 0 18 18"><path d="M9 0l8.500 5v8L9 18 .5 13V5z" fill="#2c8b45"/><path d="M9 0l8.500 5L9 9.500z" fill="#6ac276"/><path d="M.5 13L9 6l5 8-5 4z" fill="#175c2e"/><path d="M5 5l4-2v7z" fill="#9bdb9c"/></svg></a>
    <a href="#" class="run" aria-label="File Explorer"><svg viewBox="0 0 18 18"><path d="M0 2h7l2 2h8v12H0z" fill="#e5a823"/><path d="M0 6h17v9H0z" fill="#fad666"/><path d="M3 16v-5h11v5h-3v-2.500H6V16z" fill="#3593d8"/><path d="M14 11v7M16.500 11v7" stroke="#d13246" stroke-width="1.500"/></svg></a>
    <a href="#" class="run" aria-label="Acrobat Reader"><svg viewBox="0 0 18 18"><path d="M0 0h18v18H0z" fill="#b9100d"/><path d="M4 13.500q5-3 5-9.500 0 6 5.500 7.500-5.500-1-10.500 2z" fill="none" stroke="#fff" stroke-width="1.200"/><path d="M14 11v7M16.500 11v7" stroke="#f07a80" stroke-width="1.200"/></svg></a>
    <a href="#" class="run" aria-label="ArcMap"><svg viewBox="0 0 18 18"><circle cx="9" cy="8" r="8" fill="#2a86b6"/><path d="M2 4q5-4 8-1l-2 4-4 2zM10 8l6-2q1 5-4 8z" fill="#78bf8a"/><circle cx="8" cy="8" r="3.500" fill="#c5e5f0" stroke="#31566e"/><path d="M11 11l4 5" stroke="#e3d3a0" stroke-width="1.800"/><path d="M14 11v7M16.500 11v7" stroke="#d13246" stroke-width="1.500"/></svg></a>
    <i class="divider"></i>
    <a href="#" aria-label="PDF document"><svg viewBox="0 0 18 18"><path d="M1 0h16v18H1z" fill="#c0110f"/><path d="M1 0h16v4H1z" fill="#341cd4"/><path d="M5 14q4-2 4-8 0 5 5 6.500-5-1-9 1.500z" fill="none" stroke="#fff"/></svg></a>
    <a href="#" aria-label="Trash"><svg viewBox="0 0 18 18"><path d="M2 2h14l-2 15.500H4z" fill="#555b5f"/><path d="M2 2h14M5 4l1 12M8 4l.5 12M12 4l-1 12M14 4l-8 10" stroke="#899194" stroke-width=".8"/></svg></a>
  </nav>
</div>
</body>
</html>
```
FILE: styles.css
```css
* { box-sizing: border-box; }
body {
  margin: 0;
  min-height: 100vh;
  display: flex;
  flex-direction: column;
  font: 5px/7px Lato, sans-serif;
  color: #111;
  background: #f3f4f6;
  overflow: hidden;
}
.sprite { display: none; }
svg { width: 7px; height: 7px; flex: none; display: block; }
a { color: inherit; text-decoration: none; }
button, select {
  margin: 0;
  padding: 0;
  border: 0;
  background: none;
  font: inherit;
  color: inherit;
  appearance: none;
}

/* macOS menu bar */
.macbar {
  display: flex;
  align-items: center;
  height: 10px;
  padding: 0 3px 0 8px;
  font: 6px/10px Lato, sans-serif;
  color: #fff;
  background: linear-gradient(90deg, #0c0b1c, #1c1430 50%, #3d2048);
}
.macmenu { display: flex; align-items: center; gap: 8px; flex: 1; }
.macmenu b { font-weight: 700; }
.apple { width: 5px; height: 6px; }
.tray { display: flex; justify-content: space-between; width: 250px; margin-right: 4px; }
.clock { display: flex; gap: 4px; }

.titlebar {
  display: flex;
  align-items: center;
  gap: 2px;
  height: 9px;
  padding: 0 6px 0 1px;
  color: #b9aee0;
  background: #5f4ea2;
}
.appicon { width: 5px; height: 5px; }
.wincontrols { display: flex; gap: 12px; margin-left: auto; color: #eee; }
.wincontrols svg { width: 6px; height: 6px; }

.menubar { display: flex; gap: 5px; height: 10px; padding-left: 4px; line-height: 10px; }

/* Toolbars */
.toolbar { display: flex; align-items: center; gap: 2px; height: 10px; padding-left: 4px; }
.g1, .g2, .g3, .g4, .g5, .gd { display: flex; flex: none; }
.g1 { width: 9px; }
.gd { width: 14px; }
.g2 { width: 17px; }
.g3 { width: 26px; }
.g4 { width: 34px; }
.g5 { width: 43px; }
.toolbar button, .tools button { flex: 1; display: flex; justify-content: center; align-items: center; height: 9px; }
.toolbar .drop, .tools .drop { flex: none; width: 5px; }
.toolbar button svg, .tools button svg { width: 8px; height: 8px; }
.toolbar .drop svg, .tools .drop svg { width: 4px; height: 4px; }
.on { background: #cce6f8; outline: 1px solid #8cc4ea; outline-offset: -1px; }
.dim { color: #b0b0b0; opacity: .7; }
.grayed { background: #d6d6d6; }
.grip { width: 3px; height: 7px; background: #a5a5a5; align-self: flex-end; }
.second { margin-left: 8px; }
.scale { width: 60px; height: 8px; background: #f7f7f7; border: 1px solid #e4e4e4; }
.swatch { width: 11px; height: 6px; background: #1b62b5; }
.tiny { width: 9px; height: 8px; background: #fff; }
.toolbar .classify { flex: none; gap: 1px; width: 34px; white-space: nowrap; }
.toolbar .classify svg { width: 3px; height: 3px; }
.layerpick { display: flex; align-items: center; width: 70px; height: 8px; padding-right: 1px; background: #f1f1f1; border: 1px solid #8c8c8c; }
.layerpick select { flex: 1; height: 6px; }
.layerpick svg { width: 3px; height: 3px; }

/* Work area */
.work { flex: 1; display: flex; min-height: 0; }
.pane { display: flex; flex-direction: column; }
.toc { width: 111px; }
.catalog { width: 228px; margin-left: 3px; }
.pane h2 {
  display: flex;
  align-items: center;
  height: 8px;
  margin: 0;
  padding: 0 2px 0 1px;
  font: inherit;
  line-height: 8px;
  background: #c9dceb;
}
.pane h2 span { display: flex; gap: 2px; margin-left: auto; }
.pane h2 svg { width: 4px; height: 4px; }
.tools { display: flex; align-items: center; gap: 2px; height: 10px; padding-left: 1px; color: #777; }
.catalog .tools { gap: 3px; }
.sep { border-left: 1px solid #ccc; }
.list { flex: 1; padding: 1px 0 0 9px; background: #fff; border: 1px solid #a8a8a8; border-left-color: #ccc; }
.layer { display: flex; align-items: center; gap: 1px; }
.layer b { color: #fff; background: #0f74d0; line-height: 7px; }

.map {
  flex: 1;
  display: grid;
  grid-template: 1fr 9px / 1fr 5px;
  margin-left: 1px;
  border-top: 1px solid #777;
  border-left: 1px solid #777;
}
.canvas { background: #fff; }
.vbar { display: flex; flex-direction: column; align-items: center; gap: 2px; padding: 2px 0; background: #f0f0f0; border-left: 1px solid #ddd; }
.vbar i { flex: 1; width: 4px; background: #cbcccd; }
.vbar svg { width: 4px; height: 4px; }
.flip { transform: rotate(180deg); }
.hbar { grid-column: 1 / -1; display: flex; align-items: center; gap: 2px; padding: 0 6px 0 0; color: #444; }
.hbar svg { width: 5px; height: 5px; }
.hbar .sel { background: #b5dcd8; }
.hbar b { width: 1px; height: 5px; background: #aaa; }
.hbar .prev { transform: rotate(90deg); }
.hbar .next { transform: rotate(-90deg); }
.hbar i { flex: 1; height: 5px; margin-right: 20px; background: #c6c6c7; }

.location { display: flex; align-items: center; gap: 2px; height: 9px; padding-left: 1px; }
.field { flex: 1; display: flex; align-items: center; gap: 1px; height: 8px; padding: 0 1px; background: #fff; border: 1px solid #aaa; }
.field select { flex: 1; height: 6px; line-height: 6px; }
.field svg { width: 7px; height: 7px; }
.field .arrow { width: 3px; height: 3px; }
.treebox { flex: 1; background: #fff; border: 1px solid #8f969c; border-right-color: #ccc; }
.tree { display: grid; grid-auto-rows: 1fr; height: 147px; margin: 0; padding: 0 0 0 3px; list-style: none; }
.tree li { display: flex; align-items: center; gap: 1px; min-height: 0; white-space: nowrap; }
.tree li > svg { width: 7px; height: 7px; }
.tree li > svg:first-child { width: 5px; height: 5px; }
.tree .l1 { padding-left: 7px; }
.tree .l2 { padding-left: 14px; }
.current { background: #e2e2e2; line-height: 6px; }
.anchor { position: relative; }
.cursor { position: absolute; left: 1px; top: 4px; width: 9px; height: 14px; }
.tabs { display: flex; gap: 2px; height: 10px; padding-left: 2px; }
.tabs button { display: flex; align-items: center; gap: 1px; height: 9px; padding: 0 1px; color: #777; border: 1px solid #ccc; border-top: 0; }
.tabs .active { color: #222; background: #fff; }

.status { display: flex; justify-content: flex-end; height: 8px; padding-right: 31px; line-height: 8px; background: #f0f0f2; }

/* Dock */
.desktop {
  display: flex;
  justify-content: center;
  height: 27px;
  background:
    radial-gradient(circle at 8% 60%, #3a1024, transparent 10%),
    radial-gradient(circle at 94% 50%, #351022, transparent 10%),
    linear-gradient(90deg, #16070f, #2a1121 20%, #200c1a 80%, #14060d);
}
.dock { display: flex; justify-content: space-between; align-items: center; width: 73%; padding-bottom: 2px; background: #2a1425; }
.dock a { position: relative; width: 17px; height: 17px; }
.dock a > svg { width: 17px; height: 17px; }
.dock .run::after { content: ""; position: absolute; left: 8px; bottom: -4px; width: 2px; height: 1px; background: #aaa; }
.divider { width: 4px; height: 18px; border-left: 1px solid #4a3444; }
.dock .cal { display: flex; flex-direction: column; overflow: hidden; border-radius: 3px; background: #fff; text-align: center; }
.cal em { height: 5px; font: 4px/5px Inter, sans-serif; color: #fff; background: #e8413c; }
.cal span { font: 10px/12px Inter, sans-serif; color: #333; }
.dock .cal .badge { position: absolute; right: 0; top: 0; width: 6px; height: 6px; }
```
